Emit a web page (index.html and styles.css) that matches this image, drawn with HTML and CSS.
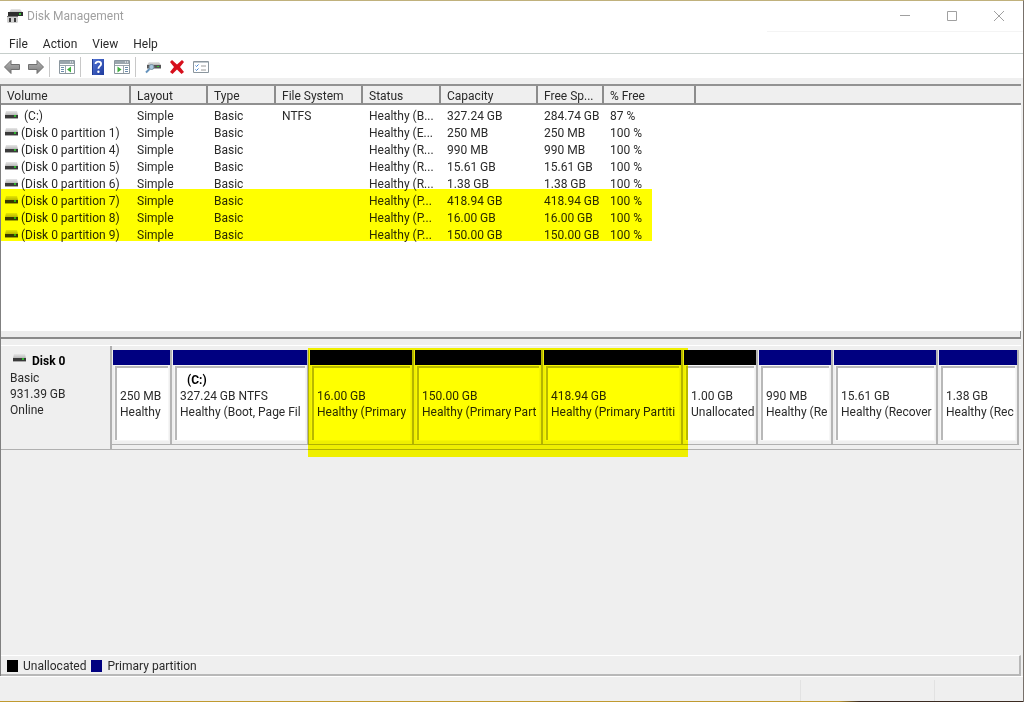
FILE: index.html
```html
<!DOCTYPE html>
<html lang="en">
<head>
<meta charset="utf-8">
<title>Disk Management</title>
<link rel="stylesheet" href="styles.css">
</head>
<body>
<svg class="defs" aria-hidden="true">
  <defs>
    <linearGradient id="lid" x1="0" y1="0" x2="0" y2="1"><stop offset="0" stop-color="#e6e6e6"/><stop offset="1" stop-color="#b8b8b8"/></linearGradient>
    <linearGradient id="arrow" x1="0" y1="0" x2="0" y2="1"><stop offset="0" stop-color="#b4b4b4"/><stop offset="1" stop-color="#7c7c7c"/></linearGradient>
    <linearGradient id="book" x1="0" y1="0" x2="1" y2="1"><stop offset="0" stop-color="#5577d8"/><stop offset="1" stop-color="#1d3a9c"/></linearGradient>
    <symbol id="drive" viewBox="0 0 14 8">
      <path d="M1 0h11l1 4H0z" fill="url(#lid)"/>
      <rect y="4" width="13" height="3" fill="#3a3a3a"/>
      <rect y="7" width="13" height="1" fill="#a8a8a8"/>
      <rect x="9" y="4" width="2" height="2" fill="#2fb52f"/>
    </symbol>
  </defs>
</svg>
<div class="window">
  <header class="titlebar">
    <svg class="app-icon" viewBox="0 0 16 16" aria-hidden="true">
      <path d="M4 1h9l3 4H2z" fill="url(#lid)"/>
      <rect x="1" y="4" width="15" height="4" fill="#2e2e2e"/>
      <rect x="12" y="5" width="2" height="2" fill="#35c135"/>
      <path d="M0 8h11v6l-1 1H1l-1-1z" fill="#cfcfcf"/>
      <path d="M0 8h11v1H0z" fill="#777"/>
      <rect x="2" y="10" width="2" height="4" fill="#3a3a3a"/><rect x="7" y="10" width="2" height="4" fill="#3a3a3a"/>
    </svg>
    <h1 class="title">Disk Management</h1>
    <div class="controls">
      <button class="control" aria-label="Minimize"><svg viewBox="0 0 12 12"><path d="M1 5.500h10"/></svg></button>
      <button class="control" aria-label="Maximize"><svg viewBox="0 0 12 12"><path d="M1.500 1.500h9v9h-9z"/></svg></button>
      <button class="control" aria-label="Close"><svg viewBox="0 0 12 12"><path d="M1 1l10 10M11 1L1 11"/></svg></button>
    </div>
  </header>
  <nav class="menubar">
    <button class="menu">File</button><button class="menu">Action</button><button class="menu">View</button><button class="menu">Help</button>
  </nav>
  <div class="toolbar" role="toolbar">
    <button class="tool" aria-label="Back"><svg viewBox="0 0 16 16"><path d="M.5 8L7 1.500v4h8.500v5H7v4z" fill="url(#arrow)" stroke="#707070"/></svg></button>
    <button class="tool" aria-label="Forward"><svg viewBox="0 0 16 16"><path d="M15.500 8L9 1.500v4H.5v5H9v4z" fill="url(#arrow)" stroke="#707070"/></svg></button>
    <span class="divider"></span>
    <button class="tool" aria-label="Show console tree"><svg viewBox="0 0 16 16"><path d="M.5 1.500h15v13H.5z" fill="#fff" stroke="#8b969e"/><path d="M1 2h14v3H1z" fill="#9aa5ad"/><path d="M11 3h1M13 3h1" stroke="#fff"/><path d="M1 6.500h14M6.500 6v8" stroke="#9aa5ad"/><path d="M2 8.500h3M2 10.500h3M2 12.500h3" stroke="#6c8cab"/><path d="M12 7.500v6L8 10.500z" fill="#3fae3f"/></svg></button>
    <span class="divider"></span>
    <button class="tool" aria-label="Help"><svg viewBox="0 0 16 16"><path d="M2 0h12v16H2z" fill="url(#book)"/><path d="M2.500 0v16" stroke="#203a92"/><path d="M5.500 5c0-3.200 5.600-3.200 5.600 0 0 2.200-2.700 2.200-2.700 4.700" fill="none" stroke="#fff" stroke-width="1.800"/><circle cx="8.400" cy="12.700" r="1.200" fill="#fff"/></svg></button>
    <button class="tool" aria-label="Show action pane"><svg viewBox="0 0 16 16"><path d="M.5 1.500h15v13H.5z" fill="#fff" stroke="#8b969e"/><path d="M1 2h14v3H1z" fill="#9aa5ad"/><path d="M11 3h1M13 3h1" stroke="#fff"/><path d="M1 6.500h14M9.500 6v8" stroke="#9aa5ad"/><path d="M11 8.500h3M11 10.500h3M11 12.500h3" stroke="#6c8cab"/><path d="M3.500 7.500v6l4-3z" fill="#3fae3f"/></svg></button>
    <span class="divider"></span>
    <button class="tool" aria-label="Rescan disks"><svg viewBox="0 0 16 16"><path d="M4 3h10l2 3H2z" fill="url(#lid)"/><path d="M2 6h14v3H2z" fill="#555"/><path d="M2 9h14v1H2z" fill="#aaa"/><path d="M12 7h2v1h-2z" fill="#2fc52f"/><circle cx="6.500" cy="8" r="2.500" fill="#a9c6dd" stroke="#78909f"/><path d="M4.500 10L1 13.500" stroke="#6593bd" stroke-width="2"/></svg></button>
    <button class="tool" aria-label="Delete"><svg viewBox="0 0 16 16"><path d="M3 1l5 4.500L13 1l2 2-4 5 4 5-2.500 2L8 10.500 3.500 15 1 13l4-5-4-5z" fill="#d60f1c"/></svg></button>
    <button class="tool" aria-label="Properties"><svg viewBox="0 0 16 16"><path d="M.5 2.500h15v11H.5z" fill="#fff" stroke="#8b969e"/><path d="M1 3.500h14" stroke="#c3cacf"/><path d="M2.500 6.500l1 1 2-2M2.500 10.500l1 1 2-2" fill="none" stroke="#3f82d0"/><path d="M8 7h5M8 11h5" stroke="#9a9a9a"/></svg></button>
  </div>
  <main class="content">
    <section class="volumes">
      <table class="list">
        <colgroup><col class="c-volume"><col class="c-layout"><col class="c-type"><col class="c-fs"><col class="c-status"><col class="c-capacity"><col class="c-free"><col class="c-percent"><col></colgroup>
        <thead><tr><th>Volume</th><th>Layout</th><th>Type</th><th>File System</th><th>Status</th><th>Capacity</th><th>Free Sp...</th><th>% Free</th><th></th></tr></thead>
        <tbody>
          <tr><td><svg class="drive"><use href="#drive"/></svg>&nbsp;(C:)</td><td>Simple</td><td>Basic</td><td>NTFS</td><td>Healthy (B...</td><td>327.24 GB</td><td>284.74 GB</td><td>87 %</td><td></td></tr>
          <tr><td><svg class="drive"><use href="#drive"/></svg>(Disk 0 partition 1)</td><td>Simple</td><td>Basic</td><td></td><td>Healthy (E...</td><td>250 MB</td><td>250 MB</td><td>100 %</td><td></td></tr>
          <tr><td><svg class="drive"><use href="#drive"/></svg>(Disk 0 partition 4)</td><td>Simple</td><td>Basic</td><td></td><td>Healthy (R...</td><td>990 MB</td><td>990 MB</td><td>100 %</td><td></td></tr>
          <tr><td><svg class="drive"><use href="#drive"/></svg>(Disk 0 partition 5)</td><td>Simple</td><td>Basic</td><td></td><td>Healthy (R...</td><td>15.61 GB</td><td>15.61 GB</td><td>100 %</td><td></td></tr>
          <tr><td><svg class="drive"><use href="#drive"/></svg>(Disk 0 partition 6)</td><td>Simple</td><td>Basic</td><td></td><td>Healthy (R...</td><td>1.38 GB</td><td>1.38 GB</td><td>100 %</td><td></td></tr>
          <tr><td><svg class="drive"><use href="#drive"/></svg>(Disk 0 partition 7)</td><td>Simple</td><td>Basic</td><td></td><td>Healthy (P...</td><td>418.94 GB</td><td>418.94 GB</td><td>100 %</td><td></td></tr>
          <tr><td><svg class="drive"><use href="#drive"/></svg>(Disk 0 partition 8)</td><td>Simple</td><td>Basic</td><td></td><td>Healthy (P...</td><td>16.00 GB</td><td>16.00 GB</td><td>100 %</td><td></td></tr>
          <tr><td><svg class="drive"><use href="#drive"/></svg>(Disk 0 partition 9)</td><td>Simple</td><td>Basic</td><td></td><td>Healthy (P...</td><td>150.00 GB</td><td>150.00 GB</td><td>100 %</td><td></td></tr>
        </tbody>
      </table>
      <div class="marker marker-rows"></div>
    </section>
    <div class="splitter"></div>
    <section class="disks">
      <div class="disk">
        <div class="disk-label">
          <h2 class="disk-name"><svg class="drive"><use href="#drive"/></svg>Disk 0</h2>
          <p>Basic</p><p>931.39 GB</p><p>Online</p>
        </div>
        <div class="partitions">
          <div class="part"><div class="bar"></div><div class="info"><b></b><p>250 MB</p><p>Healthy</p></div></div>
          <div class="part"><div class="bar"></div><div class="info"><b>(C:)</b><p>327.24 GB NTFS</p><p>Healthy (Boot, Page Fil</p></div></div>
          <div class="part free"><div class="bar"></div><div class="info"><b></b><p>16.00 GB</p><p>Healthy (Primary</p></div></div>
          <div class="part free"><div class="bar"></div><div class="info"><b></b><p>150.00 GB</p><p>Healthy (Primary Part</p></div></div>
          <div class="part free"><div class="bar"></div><div class="info"><b></b><p>418.94 GB</p><p>Healthy (Primary Partiti</p></div></div>
          <div class="part free"><div class="bar"></div><div class="info"><b></b><p>1.00 GB</p><p>Unallocated</p></div></div>
          <div class="part"><div class="bar"></div><div class="info"><b></b><p>990 MB</p><p>Healthy (Re</p></div></div>
          <div class="part"><div class="bar"></div><div class="info"><b></b><p>15.61 GB</p><p>Healthy (Recover</p></div></div>
          <div class="part"><div class="bar"></div><div class="info"><b></b><p>1.38 GB</p><p>Healthy (Rec</p></div></div>
          <div class="marker marker-parts"></div>
        </div>
      </div>
    </section>
    <footer class="legend">
      <span class="key"><i class="swatch black"></i>Unallocated</span>
      <span class="key"><i class="swatch navy"></i>Primary partition</span>
    </footer>
  </main>
  <div class="statusbar"><span></span><span></span><span></span></div>
</div>
</body>
</html>
```
FILE: styles.css
```css
* { box-sizing: border-box; }
body { margin: 0; font: 12px/16px "Segoe UI", Roboto, "Open Sans", sans-serif; color: #2a2a2a; background: #efefef; }
h1, h2, p { margin: 0; font-size: inherit; font-weight: inherit; }
button { border: 0; padding: 0; background: none; font: inherit; color: inherit; }
.defs { position: absolute; width: 0; height: 0; }
.window { display: flex; flex-direction: column; min-height: 100vh; border-top: 1px solid #c0b17c; border-right: 1px solid #77706a; }

.titlebar { display: flex; align-items: center; height: 30px; padding: 0 1px 0 7px; background: #fff; }
.app-icon { width: 16px; height: 16px; margin-right: 4px; }
.title { flex: 1; color: #a0a0a0; }
.controls { display: flex; }
.control { display: flex; align-items: center; justify-content: center; width: 47px; height: 30px; }
.control svg { width: 12px; height: 12px; fill: none; stroke: #a0a0a0; }

.menubar { display: flex; gap: 15px; height: 23px; padding: 3px 9px 0; background: linear-gradient(#f4f4f4, #f4f4f4) right top / 25% 1px no-repeat #fff; border-bottom: 1px solid #c6cecb; }

.toolbar { display: flex; align-items: center; height: 24px; padding-top: 2px; background: #fff; }
.tool { display: flex; justify-content: center; width: 24px; }
.tool svg { width: 16px; height: 16px; }
.divider { width: 1px; height: 20px; margin: 0 5px 0 1px; background: #c8c8c8; }

.content { flex: 1; display: flex; flex-direction: column; margin: 6px 2px 0 0; border-left: 1px solid #808080; border-top: 2px solid #929292; }
.volumes { position: relative; flex: 248 0 0; background: #fff; }
.list { width: 100%; table-layout: fixed; border-collapse: separate; border-spacing: 0; }
.c-volume { width: 130px; } .c-layout { width: 77px; } .c-type { width: 68px; } .c-fs { width: 87px; } .c-status { width: 78px; }
.c-capacity { width: 97px; } .c-free { width: 66px; } .c-percent { width: 92px; }
th, td { padding: 0 0 0 6px; text-align: left; font-weight: normal; white-space: nowrap; }
th { height: 19px; padding-top: 4px; background: #efefef; border-right: 2px solid #8c8c8c; border-bottom: 2px solid #909090; line-height: 13px; }
th:last-child { border-right: 0; }
td { height: 17px; line-height: 17px; }
tbody tr:first-child td { padding-top: 3px; }
td:first-child { padding-left: 4px; }
.drive { width: 14px; height: 8px; margin-right: 2px; vertical-align: 1px; }

.marker { position: absolute; background: #ff0; mix-blend-mode: multiply; }
.marker-rows { left: 0; top: 103px; width: 651px; height: 52px; }
.marker-parts { left: calc(100% * 196 / 908); width: calc(100% * 381 / 908); top: -2px; height: 109px; }

.splitter { height: 8px; background: #ececec; border: solid #8a8a8a; border-width: 0 1px 2px 0; }
.disks { flex: 314 0 0; padding-top: 6px; }
.disk { display: flex; border-top: 1px solid #fff; border-bottom: 1px solid #b0b0b0; }
.disk-label { width: 111px; height: 103px; padding: 7px 9px; border-right: 2px solid #b0b0b0; }
.disk-name { font-weight: bold; color: #000; line-height: 17px; padding-left: 3px; }
.disk-name .drive { margin-right: 5px; vertical-align: 3px; }
.partitions { position: relative; flex: 1; display: grid; grid-template-columns: 60fr 137fr 105fr 129fr 140fr 75fr 75fr 105fr 81fr; margin: 4px 2px 4px 0; border-bottom: 1px solid #b0b0b0; }
.part { display: flex; flex-direction: column; min-width: 0; border-right: 2px solid #b4b4b4; padding-left: 1px; }
.bar { height: 15px; background: #000080; }
.free .bar { background: #000; }
.info { flex: 1; min-width: 0; overflow: hidden; margin: 1px 2px 4px; padding: 4px 1px 4px 3px; border: solid #b8b8b8; border-width: 2px 0 0 2px; background: #fff; box-shadow: 0 0 0 1px #f6f6f6; white-space: nowrap; }
.info b { display: block; height: 16px; padding-left: 7px; color: #000; }

.legend { display: flex; align-items: center; gap: 5px; height: 21px; padding: 1px 0 0 6px; border-top: 1px solid #fff; border-right: 2px solid #b8b8b8; border-bottom: 2px solid #b8b8b8; }
.key { display: flex; align-items: center; gap: 5px; }
.swatch { width: 11px; height: 12px; }
.black { background: #000; } .navy { background: #000080; }
.statusbar { display: grid; grid-template-columns: 801fr 134fr 88fr; height: 26px; padding: 3px 0 1px; border-top: 1px solid #fff; background: linear-gradient(90deg, #c09a30 82%, #3a2a20 84%) left bottom / 100% 1px no-repeat; }
.statusbar span { border-right: 1px solid #e2e2e2; }
.statusbar span:last-child { border: 0; }
```
